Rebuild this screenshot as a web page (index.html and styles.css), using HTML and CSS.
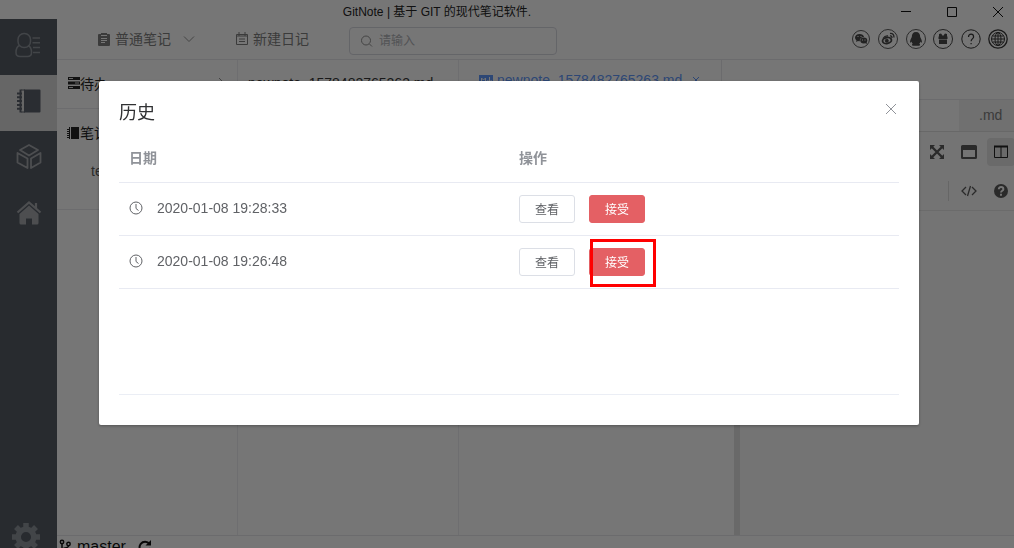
FILE: index.html
```html
<!DOCTYPE html>
<html lang="zh-CN">
<head>
    <meta charset="UTF-8">
    <meta name="viewport" content="width=device-width, initial-scale=1.0">
    <title>GitNote</title>
    <link rel="stylesheet" href="styles.css">
</head>
<body>
    <div class="app">
        <header class="titlebar">
            <div class="title">GitNote | 基于 GIT 的现代笔记软件.</div>
            <div class="win-btns">
                <button type="button" aria-label="最小化"><svg width="16" height="16" viewBox="0 0 16 16"><path d="M3 7.500h10"/></svg></button>
                <button type="button" aria-label="最大化"><svg width="16" height="16" viewBox="0 0 16 16"><path d="M3.500 3.500h9v9h-9z"/></svg></button>
                <button type="button" aria-label="关闭"><svg width="16" height="16" viewBox="0 0 16 16"><path d="M3 3l10 10M13 3L3 13"/></svg></button>
            </div>
        </header>

        <div class="body">
            <nav class="sidebar">
                <a href="#" aria-label="用户">
                    <svg width="28" height="28" viewBox="0 0 28 28" fill="none" stroke="#858a90" stroke-width="1.500"><rect x="4" y="2.500" width="12.500" height="14" rx="6"/><path d="M5.500 14.500C3 15.500 2 17.500 2 21.500c0 3 1.500 4 4 4h7.500c2.500 0 4-1 4-4 0-3.500-1-6-3.500-7M18.500 7H26M18.500 11.700H26M19 16.500h7M19 21.500h7"/></svg>
                </a>
                <a href="#" class="active" aria-label="笔记">
                    <svg width="28" height="28" viewBox="0 0 28 28" fill="#545b64"><path d="M10 2.500h15.500q1 0 1 1v21q0 1-1 1H10zM5.500 2.500h2v23h-2z"/><path d="M7 3h4M7 25h4" stroke="#545b64"/><path d="M3 6.500h5M3 10.300h5M3 14.100h5M3 17.900h5M3 21.700h5" stroke="#545b64" stroke-width="2"/></svg>
                </a>
                <a href="#" aria-label="仓库">
                    <svg width="28" height="28" viewBox="0 0 28 28" fill="none" stroke="#9a9da1" stroke-width="1.800" stroke-linejoin="round"><path d="M15 2l9 5-9 5.500L6 7zM3.500 10l10 5.500V25l-10-5.500zM26.500 10l-9.500 5.500V25l9.500-5.500z"/></svg>
                </a>
                <a href="#" aria-label="主页">
                    <svg width="28" height="28" viewBox="0 0 28 28"><path fill="#9a9da1" d="M15 6.500l9.500 8.500v9q0 1.500-1.500 1.500h-5v-6h-6v6H7Q5.500 25.500 5.500 24v-9z"/><path d="M3.500 13.500L15 3.500l11.500 10M22 4v5" fill="none" stroke="#9a9da1" stroke-width="2.200"/></svg>
                </a>
                <a href="#" class="setting" aria-label="设置">
                    <svg width="28" height="28" viewBox="0 0 28 28" fill="none" stroke="#858a90"><circle cx="14" cy="14" r="7.800" stroke-width="5.500"/><path d="M14 0v5M14 23v5M0 14h5M23 14h5M4 4l4 4M20 20l4 4M4 24l4-4M20 8l4-4" stroke-width="5.500"/></svg>
                </a>
            </nav>

            <div class="main">
                <div class="toolbar">
                    <button type="button" class="tool note">
                        <svg width="14" height="14" viewBox="0 0 14 14"><path fill="#777" d="M2 2h2V1h6v1h2q1 0 1 1v10q0 1-1 1H2q-1 0-1-1V3q0-1 1-1z"/><path d="M4 3.500h6M4 6.500h6M4 8.500h6M4 10.500h4" stroke="#ededed"/></svg>
                        <span>普通笔记</span>
                        <svg class="down" width="12" height="12" viewBox="0 0 12 12" fill="none" stroke="#888"><path d="M1 3.500l5 5 5-5"/></svg>
                    </button>
                    <button type="button" class="tool diary">
                        <svg width="14" height="14" viewBox="0 0 14 14" fill="none" stroke="#777"><path d="M1.500 2.500h11v10h-11zM1 4h12M4 0v4M10 0v4M4 7h6M4 9.500h6"/></svg>
                        <span>新建日记</span>
                    </button>
                    <label class="search">
                        <svg width="14" height="14" viewBox="0 0 14 14" fill="none" stroke="#888"><circle cx="6" cy="6.500" r="4.500"/><path d="M9.500 10l2.500 2.500"/></svg>
                        <input type="text" placeholder="请输入" aria-label="搜索">
                    </label>
                    <div class="links">
                        <a href="#" aria-label="微信"><svg width="20" height="20" viewBox="0 0 20 20"><circle cx="10" cy="10" r="8.500" fill="none" stroke="#555"/><path fill="#444" d="M8.500 5C5.800 5 4 6.600 4 8.600c0 1.200.6 2.100 1.500 2.800L5 13l2-.9c.6.2 1.200.2 1.800.2-.3-2.600 1.700-4.300 4.300-4.200C12.700 6.200 10.800 5 8.500 5z"/><ellipse cx="12.800" cy="11.600" rx="3.500" ry="3" fill="#444"/><path fill="#444" d="M14 14l2 1-.5-2z"/><path d="M6.500 7.500h1M9.500 7.500h1M11 11h1M13.500 11h1" stroke="#ededed"/></svg></a>
                        <a href="#" aria-label="微博"><svg width="20" height="20" viewBox="0 0 20 20" fill="none" stroke="#444"><circle cx="10" cy="10" r="9.500" stroke="#555"/><ellipse cx="9" cy="11.500" rx="4.500" ry="3" stroke-width="1.800" transform="rotate(-12 9 11.500)"/><circle cx="8.800" cy="11.700" r="1.500" fill="#444"/><path d="M5 9.500Q7 6.500 10 7M12 7q2-.5 2 2M12 4.500q4-.5 4 4" stroke-width="1.300"/></svg></a>
                        <a href="#" aria-label="QQ"><svg width="20" height="20" viewBox="0 0 20 20"><circle cx="10" cy="10" r="9.500" fill="none" stroke="#555"/><path fill="#444" d="M10 3C7 3 5.800 5 5.800 8 5 9.500 4 11.500 4 13.500c.8.200 1.300-.5 1.500-1 .2 1 .6 1.700 1.200 2.300-1 .5-1 1.700 0 1.900h6.600c1-.2 1-1.400 0-1.900.6-.6 1-1.300 1.200-2.300.2.500.7 1.200 1.500 1 0-2-1-4-1.800-5.500C14.200 5 13 3 10 3z"/></svg></a>
                        <a href="#" aria-label="捐赠"><svg width="20" height="20" viewBox="0 0 20 20"><circle cx="10" cy="10" r="9.500" fill="none" stroke="#444"/><path fill="#444" d="M5.500 7.500h9V10h-9zM6 10.500h8V15H6zM6 5l2-.5L10 7l2-2.500 2 .5v2.500H6z"/></svg></a>
                        <a href="#" aria-label="帮助"><svg width="20" height="20" viewBox="0 0 20 20" fill="none" stroke="#333"><circle cx="10" cy="10" r="9.200"/><path d="M7.500 8c0-1.700 1-2.800 2.600-2.800S12.600 6.300 12.600 8c0 1.500-2.500 2-2.500 4.300M10.100 14v1.200" stroke-width="1.200"/></svg></a>
                        <a href="#" aria-label="语言"><svg width="20" height="20" viewBox="0 0 20 20" fill="none" stroke="#333"><circle cx="10" cy="10" r="9.200" stroke-width="1.300"/><circle cx="10" cy="10" r="6.500"/><ellipse cx="10" cy="10" rx="3" ry="6.500"/><path d="M10 3.500v13M3.500 10h13M4.500 7h11M4.500 13h11"/></svg></a>
                    </div>
                </div>

                <div class="columns">
                    <aside class="tree">
                        <div class="todo">
                            <svg width="12" height="12" viewBox="0 0 12 12" fill="#222"><path d="M0 0h12v3H0zM0 4.500h12v3H0zM0 9h12v3H0z"/><path d="M1 1.500h4M7 6h4M1 10.500h4" stroke="#ccc"/></svg>
                            <span>待办</span>
                            <svg class="arrow" width="12" height="12" viewBox="0 0 12 12" fill="none" stroke="#888"><path d="M4 1l5 5-5 5"/></svg>
                        </div>
                        <div class="notes">
                            <div class="notes-title">
                                <svg width="12" height="12" viewBox="0 0 12 12" fill="#222"><path d="M4 0h8v12H4zM2 0h1v12H2zM0 2h3v1H0zM0 4h3v1H0zM0 6h3v1H0zM0 8h3v1H0zM0 10h3v1H0z"/></svg>
                                <span>笔记</span>
                            </div>
                            <div class="notes-item">test</div>
                        </div>
                    </aside>
                    <div class="files">
                        <div class="file">newnote_1578482765263.md</div>
                    </div>
                    <div class="editor">
                        <div class="tabs">
                            <div class="tab">
                                <svg width="14" height="10" viewBox="0 0 14 10"><path fill="#5b8fea" d="M0 0h14v10H0z"/><path d="M2.500 8V3l2 2 2-2v5M10.500 2v5M8.500 5l2 2.500 2-2.500" fill="none" stroke="#ededed"/></svg>
                                <span>newnote_1578482765263.md</span>
                                <svg width="8" height="8" viewBox="0 0 8 8" stroke="#5b8fea"><path d="M1 1l6 6M7 1L1 7"/></svg>
                            </div>
                        </div>
                        <div class="filename"><span>.md</span></div>
                        <div class="edit-tools">
                            <div class="tools-row">
                                <button type="button" aria-label="全屏"><svg width="14" height="14" viewBox="0 0 14 14"><path fill="#555" d="M0 0h5L0 5zM14 0v5L9 0zM0 14V9l5 5zM14 14H9l5-5z"/><path d="M2 2l10 10M12 2L2 12" stroke="#555" stroke-width="2.400"/></svg></button>
                                <button type="button" aria-label="预览"><svg width="16" height="14" viewBox="0 0 16 14"><path fill="#555" fill-rule="evenodd" d="M1.500 0h13Q16 0 16 1.500v11q0 1.500-1.500 1.500h-13Q0 14 0 12.500v-11Q0 0 1.500 0zM2 5v7h12V5z"/></svg></button>
                                <button type="button" class="on" aria-label="分栏"><svg width="14" height="14" viewBox="0 0 14 14" fill="none" stroke="#222"><path d="M.500 1.500h13v11H.500zM7 1v12"/><path d="M0 1.500h14" stroke-width="2"/></svg></button>
                            </div>
                            <div class="tools-row">
                                <i class="split"></i>
                                <button type="button" aria-label="源码"><svg width="16" height="14" viewBox="0 0 16 14" fill="none" stroke="#555" stroke-width="1.300"><path d="M5 3L1 7l4 4M11 3l4 4-4 4M9.500 2l-3 10"/></svg></button>
                                <button type="button" aria-label="语法"><svg width="14" height="14" viewBox="0 0 14 14"><circle cx="7" cy="7" r="7" fill="#555"/><path d="M4.800 5.200c0-3 4.600-2.800 4.600 0C9.400 6.800 7 6.800 7 8.500M7 9.800v2" fill="none" stroke="#ededed" stroke-width="1.900"/></svg></button>
                            </div>
                        </div>
                        <div class="panes">
                            <div class="source"></div>
                            <div class="gutter"></div>
                            <div class="preview"></div>
                        </div>
                    </div>
                </div>

                <footer class="status">
                    <svg width="12" height="16" viewBox="0 0 12 16" fill="none" stroke="#111" stroke-width="1.500"><circle cx="3" cy="3" r="1.700"/><circle cx="9.500" cy="5" r="1.700"/><circle cx="3" cy="13" r="1.700"/><path d="M3 5v6M9.500 7c0 2.500-6.500 1.500-6.500 4"/></svg>
                    <span>master</span>
                    <svg width="14" height="14" viewBox="0 0 14 14" fill="none" stroke="#111" stroke-width="2"><path d="M11.500 4A5.500 5.500 0 1 0 12.500 8"/><path d="M13 0v5.500H7.500z" fill="#111" stroke="none"/></svg>
                </footer>
            </div>
        </div>
    </div>

    <div class="mask">
        <div class="dialog" role="dialog" aria-labelledby="dialogTitle">
            <div class="dialog-head">
                <h2 id="dialogTitle">历史</h2>
                <button type="button" class="close" aria-label="关闭"><svg width="12" height="12" viewBox="0 0 12 12" stroke="#909399"><path d="M1 1l10 10M11 1L1 11"/></svg></button>
            </div>
            <div class="table-box">
                <table>
                    <thead>
                        <tr><th>日期</th><th>操作</th></tr>
                    </thead>
                    <tbody>
                        <tr>
                            <td><div class="date"><svg width="14" height="14" viewBox="0 0 14 14" fill="none" stroke="#606266"><circle cx="7" cy="7" r="6"/><path d="M7 3v4.500l2.500 2"/></svg><span>2020-01-08 19:28:33</span></div></td>
                            <td><div class="ops"><button type="button" class="btn">查看</button><button type="button" class="btn danger">接受</button></div></td>
                        </tr>
                        <tr>
                            <td><div class="date"><svg width="14" height="14" viewBox="0 0 14 14" fill="none" stroke="#606266"><circle cx="7" cy="7" r="6"/><path d="M7 3v4.500l2.500 2"/></svg><span>2020-01-08 19:26:48</span></div></td>
                            <td><div class="ops"><button type="button" class="btn">查看</button><button type="button" class="btn danger">接受</button><i class="highlight"></i></div></td>
                        </tr>
                    </tbody>
                </table>
            </div>
        </div>
    </div>
</body>
</html>
```
FILE: styles.css
```css
*{
    margin: 0;
    padding: 0;
    box-sizing: border-box;
}
body{
    font-family: "Liberation Sans", "Noto Sans CJK SC", sans-serif;
    font-size: 14px;
    color: #606266;
    overflow: hidden;
}
button{
    border: 0;
    background: none;
    font: inherit;
    color: inherit;
    cursor: pointer;
}
svg{
    display: block;
    flex: none;
}
.app{
    display: flex;
    flex-direction: column;
    height: 100vh;
    background-color: #ededed;
}

/* title bar */
.titlebar{
    display: flex;
    flex: none;
    height: 19px;
    padding-top: 4px;
}
.title{
    flex: 1;
    font-size: 12px;
    line-height: 16px;
    text-align: center;
    color: #222;
}
.win-btns{
    display: flex;
    gap: 30px;
    padding: 0 8px 0 24px;
}
.win-btns svg{
    fill: none;
    stroke: #111;
}
.body{
    display: flex;
    flex: 1;
    min-height: 0;
}

/* sidebar */
.sidebar{
    display: flex;
    flex-direction: column;
    flex: none;
    width: 57px;
    background-color: #50565f;
}
.sidebar a{
    display: flex;
    align-items: center;
    justify-content: center;
    height: 56px;
    flex: none;
    padding: 0 2px 4px 0;
}
.sidebar .active{
    background-color: #cdcdcd;
}
.sidebar .setting{
    height: 25px;
    margin-top: auto;
    padding: 0 5px 0 0;
    align-items: flex-start;
}
.main{
    display: flex;
    flex-direction: column;
    flex: 1;
    min-width: 0;
}

/* toolbar */
.toolbar{
    display: flex;
    align-items: center;
    flex: none;
    height: 41px;
    padding: 0 6px 0 40px;
    border-bottom: 1px solid #d6d7da;
}
.tool{
    display: flex;
    align-items: center;
    gap: 4px;
    line-height: 20px;
    color: #777;
}
.tool .down{
    margin-left: 8px;
}
.diary{
    margin-left: 40px;
}
.search{
    display: flex;
    align-items: center;
    gap: 5px;
    width: 208px;
    height: 28px;
    margin: 4px 0 0 40px;
    padding: 0 10px;
    border: 1px solid #c9cad0;
    border-radius: 4px;
}
.search input{
    flex: 1;
    min-width: 0;
    border: 0;
    outline: 0;
    background: none;
    font: inherit;
    font-size: 12px;
}
.search input::placeholder{
    color: #a4a6aa;
}
.links{
    display: flex;
    flex: 0 1 157px;
    justify-content: space-between;
    margin-left: auto;
}

/* columns */
.columns{
    display: flex;
    flex: 1;
    min-height: 0;
}
.tree{
    width: 181px;
    flex: none;
    color: #222;
    border-right: 1px solid #dcdde0;
}
.todo{
    display: flex;
    align-items: center;
    height: 49px;
    padding: 0 10px 2px 11px;
    border-bottom: 1px solid #d8d9dc;
}
.todo .arrow{
    margin-left: auto;
}
.notes{
    height: 101px;
    padding: 12px 10px;
    border-bottom: 1px solid #d8d9dc;
}
.notes-title{
    display: flex;
    align-items: center;
    gap: 1px;
    line-height: 24px;
}
.notes-item{
    padding: 14px 24px;
    line-height: 24px;
    color: #555;
}
.files{
    width: 221px;
    flex: none;
    padding: 12px 10px;
    border-right: 1px solid #dcdde0;
}
.file{
    line-height: 22px;
    color: #333;
}
.editor{
    display: flex;
    flex-direction: column;
    flex: 1;
    min-width: 0;
}
.tabs{
    display: flex;
    flex: none;
    height: 40px;
    border-bottom: 1px solid #d6d7da;
}
.tab{
    display: flex;
    align-items: center;
    gap: 4px;
    padding: 0 21px 0 20px;
    border-right: 1px solid #d6d7da;
    color: #5b8fea;
}
.tab svg:last-child{
    margin-left: 6px;
}
.filename{
    display: flex;
    justify-content: flex-end;
    flex: none;
    height: 32px;
    line-height: 31px;
    border-bottom: 1px solid #d0d0d0;
}
.filename span{
    width: 55px;
    padding-left: 20px;
    background-color: #e0e0e0;
    color: #777;
}
.edit-tools{
    flex: none;
    height: 79px;
    background-color: #e9e9e9;
    border-bottom: 1px solid #d6d6d6;
}
.tools-row{
    display: flex;
    align-items: center;
    justify-content: flex-end;
    gap: 4px;
    height: 39px;
    margin-right: -1px;
}
.tools-row button{
    display: flex;
    align-items: center;
    justify-content: center;
    width: 28px;
    height: 28px;
    border-radius: 4px;
}
.tools-row .on{
    background-color: #d4d4d4;
}
.split{
    width: 1px;
    height: 20px;
    margin-right: 2px;
    background-color: #ccc;
}
.panes{
    display: flex;
    flex: 1;
    background-color: #e9e9e9;
}
.source, .preview{
    flex: 1;
}
.source{
    background-color: #ededed;
}
.gutter{
    width: 6px;
    background-color: #d2d2d2;
}
.status{
    display: flex;
    align-items: center;
    align-self: stretch;
    flex: none;
    height: 13px;
    padding: 10px 2px 0;
    gap: 6px;
    font-size: 16px;
    color: #111;
    border-top: 1px solid #d6d7da;
}
.status svg:last-child{
    margin-left: 6px;
}

/* history dialog */
.mask{
    position: fixed;
    top: 0;
    right: 0;
    bottom: 0;
    left: 0;
    padding: 81px 95px 0 99px;
    background-color: rgba(0, 0, 0, 0.5);
}
.dialog{
    padding: 20px 20px 30px;
    background-color: #fff;
    border-radius: 2px;
    box-shadow: 0 1px 3px rgba(0, 0, 0, 0.3);
}
.dialog-head{
    display: flex;
    justify-content: space-between;
    margin-bottom: 10px;
}
.dialog-head h2{
    font-size: 18px;
    font-weight: normal;
    line-height: 24px;
    color: #303133;
}
.close{
    height: 16px;
    padding: 0 2px;
}
.table-box{
    min-height: 260px;
    border-bottom: 1px solid #ebeef5;
}
table{
    width: 100%;
    table-layout: fixed;
    border-collapse: separate;
    border-spacing: 0;
}
th, td{
    padding: 0 10px;
    border-bottom: 1px solid #e8eaf2;
    text-align: left;
}
th{
    height: 48px;
    padding-bottom: 4px;
    color: #909399;
}
td{
    height: 53px;
}
.date{
    display: flex;
    align-items: center;
    gap: 14px;
    padding-bottom: 2px;
}
.ops{
    display: flex;
    gap: 14px;
    position: relative;
}
.btn{
    width: 56px;
    height: 28px;
    padding-bottom: 2px;
    border: 1px solid #dcdfe6;
    border-radius: 3px;
    background-color: #fff;
    font-size: 12px;
    color: #606266;
}
.btn.danger{
    border-color: #e46064;
    background-color: #e46064;
    color: #fff;
}
/* frame around the accept button */
.highlight{
    position: absolute;
    top: -9px;
    left: 71px;
    width: 66px;
    height: 48px;
    border: 3px solid #f00;
}
```
